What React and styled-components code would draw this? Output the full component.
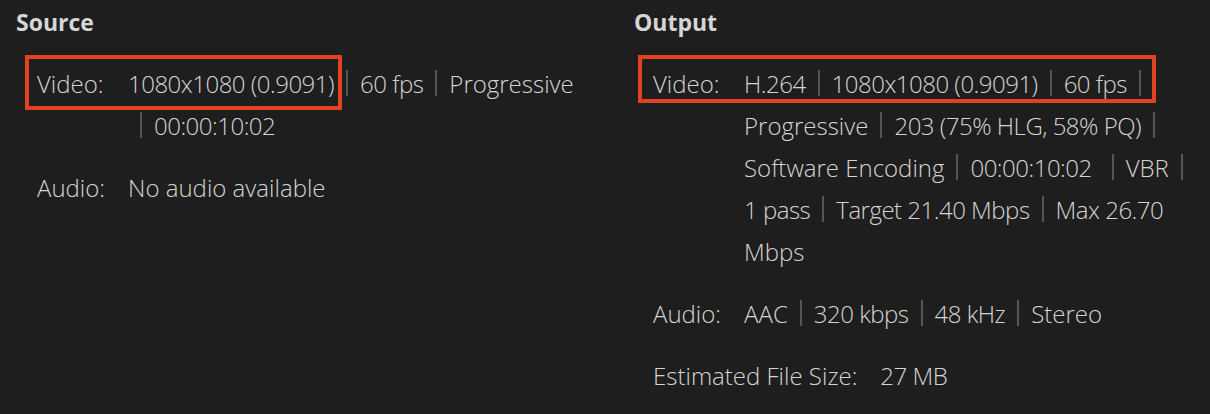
import React from 'react';
import styled, { createGlobalStyle } from 'styled-components';

const GlobalStyle = createGlobalStyle`
	html, body {
		margin: 0;
		padding: 0;
		background: #1e1e1e;
	}

	body {
		font-family: 'Open Sans', Lato, sans-serif;
		color: #d4d4d4;
	}
`;

const Page = styled.main`
	display: grid;
	grid-template-columns: 618px 1fr;
	padding: 7px 0 0 16px;
	height: 414px;
	box-sizing: border-box;
`;

const Section = styled.section`
	display: flex;
	flex-direction: column;
`;

const Heading = styled.h2`
	margin: 0 0 25px;
	font-size: 23px;
	line-height: 30px;
	font-weight: 700;
	font-stretch: 88%;
	color: #d6d6d6;
`;

const Rows = styled.div`
	display: flex;
	flex-direction: column;
	gap: 20px;
	padding-left: ${(p) => p.$indent}px;
`;

const Row = styled.div`
	display: flex;
	flex-direction: column;
`;

const Line = styled.div`
	display: flex;
	align-items: center;
	height: 42px;
	font-size: 24px;
	font-weight: 340;
	font-stretch: 88%;
	white-space: nowrap;
	padding-left: ${(p) => (p.$indented ? '91px' : '0')};
`;

const Label = styled.span`
	flex: 0 0 auto;
	min-width: 91px;
	padding-right: 23px;
	box-sizing: border-box;
`;

const Marked = styled.span`
	position: relative;
	display: inline-flex;
	align-items: center;
	height: 100%;

	&::after {
		content: '';
		position: absolute;
		top: ${(p) => p.$top}px;
		bottom: ${(p) => p.$bottom}px;
		left: ${(p) => p.$left}px;
		right: ${(p) => p.$right}px;
		border: 4px solid #e2421f;
		pointer-events: none;
	}
`;

const Sep = styled.span`
	display: inline-block;
	width: 2px;
	height: 26px;
	background: #555555;
	margin: 0 12px 0 ${(p) => (p.$wide ? 20 : 12)}px;
`;

// figures in the original face are narrower than in Open Sans
const Value = styled.span`
	letter-spacing: ${(p) => (p.$numeric ? '-0.5px' : '0')};
`;

// a line is a list of strings; '|' is a separator, '||' a wider one
const Segments = ({ items }) =>
	items.map((item, i) => {
		if (item === '|') return <Sep key={i} />;
		if (item === '||') return <Sep key={i} $wide />;
		return (
			<Value key={i} $numeric={/\d/.test(item)}>
				{item}
			</Value>
		);
	});

const InfoRow = ({ label, lines, mark }) => (
	<Row>
		{lines.map((items, i) => {
			if (i > 0) {
				return (
					<Line key={i} $indented>
						<Segments items={items} />
					</Line>
				);
			}
			const marked = mark ? items.slice(0, mark.count) : [];
			const rest = mark ? items.slice(mark.count) : items;
			return (
				<Line key={i}>
					{mark ? (
						<Marked $top={mark.top} $bottom={mark.bottom} $left={mark.left} $right={mark.right}>
							<Label>{label}</Label>
							<Segments items={marked} />
						</Marked>
					) : (
						<Label>{label}</Label>
					)}
					<Segments items={rest} />
				</Line>
			);
		})}
	</Row>
);

const source = [
	{
		label: 'Video:',
		mark: { count: 1, top: -7, bottom: -6, left: -12, right: -8 },
		lines: [
			['1080x1080 (0.9091)', '|', '60 fps', '|', 'Progressive'],
			['|', '00:00:10:02'],
		],
	},
	{ label: 'Audio:', lines: [['No audio available']] },
];

const output = [
	{
		label: 'Video:',
		mark: { count: 6, top: -7, bottom: 1, left: -15, right: -3 },
		lines: [
			['H.264', '|', '1080x1080 (0.9091)', '|', '60 fps', '|'],
			['Progressive', '|', '203 (75% HLG, 58% PQ)', '|'],
			['Software Encoding', '|', '00:00:10:02', '||', 'VBR', '|'],
			['1 pass', '|', 'Target 21.40 Mbps', '|', 'Max 26.70'],
			['Mbps'],
		],
	},
	{ label: 'Audio:', lines: [['AAC', '|', '320 kbps', '|', '48 kHz', '|', 'Stereo']] },
	{ label: 'Estimated File Size:', lines: [['27 MB']] },
];

const App = () => (
	<>
		<GlobalStyle />
		<Page>
			<Section>
				<Heading>Source</Heading>
				<Rows $indent={21}>
					{source.map((row) => (
						<InfoRow key={row.label} {...row} />
					))}
				</Rows>
			</Section>
			<Section>
				<Heading>Output</Heading>
				<Rows $indent={19}>
					{output.map((row) => (
						<InfoRow key={row.label} {...row} />
					))}
				</Rows>
			</Section>
		</Page>
	</>
);

export default App;
